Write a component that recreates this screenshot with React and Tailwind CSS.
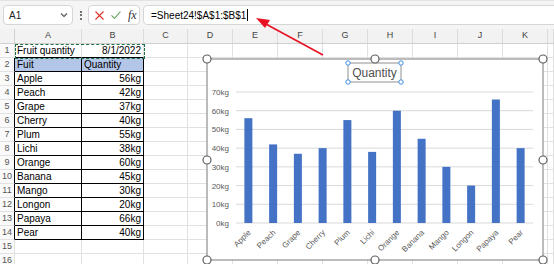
import React from "react";

const FONT = { fontFamily: '"Liberation Sans", Arial, sans-serif' };
const GRID = "grid grid-cols-[15px_67px_62px_44px_45px_45px_45px_45px_45px_45px_45px_45px_1fr]";
const LETTERS = ["A", "B", "C", "D", "E", "F", "G", "H", "I", "J", "K", ""];
const DATA = [
  ["Apple", 56], ["Peach", 42], ["Grape", 37], ["Cherry", 40], ["Plum", 55], ["Lichi", 38],
  ["Orange", 60], ["Banana", 45], ["Mango", 30], ["Longon", 20], ["Papaya", 66], ["Pear", 40],
];

function Cell({ children, className = "" }) {
  return (
    <div className={`h-full border-r border-b border-r-[#e1e1e1] border-b-[#e1e1e1] flex items-center overflow-hidden whitespace-nowrap ${className}`}>
      {children}
    </div>
  );
}

function Row({ n, a, b, kind }) {
  const inTable = kind === "head" || kind === "data";
  const rowHead = inTable ? "border-r-black" : "";
  const aCls = inTable ? "border-r-black border-b-black" : kind === "title" ? "border-b-black" : "";
  const bg = kind === "head" ? "bg-[#b4c6e7]" : "";
  return (
    <div className={`${GRID} h-[14px]`}>
      <Cell className={`justify-center text-[9px] text-[#555] bg-[#fafafa] border-r-[#d0d0d0] ${rowHead}`}>{n}</Cell>
      <Cell className={`pl-[2px] text-[10px] text-black ${bg} ${aCls}`}>{a}</Cell>
      <Cell className={`text-[10px] text-black ${bg} ${aCls} ${kind === "data" || kind === "title" ? "justify-end pr-[2px]" : "pl-[2px]"}`}>{b}</Cell>
      {Array.from({ length: 10 }).map((_, i) => (
        <Cell key={i} />
      ))}
    </div>
  );
}

function Chart() {
  const x0 = 236, x1 = 533, yBase = 223, yTop = 92;
  const pxPerKg = (yBase - yTop) / 70;
  const cw = (x1 - x0) / 12;
  const handles = [
    [207, 59], [375, 59], [543, 59], [207, 160], [543, 160], [207, 260], [375, 260], [543, 260],
  ];
  const ticks = [0, 10, 20, 30, 40, 50, 60, 70];
  return (
    <svg className="absolute left-0 top-0 pointer-events-none" width="554" height="264" viewBox="0 0 554 264">
      <rect x="207" y="59" width="336" height="201" fill="#fff" stroke="#8f8f8f" strokeWidth="1.2" />
      {ticks.map((t) => {
        const y = yBase - t * pxPerKg;
        return (
          <g key={t}>
            <line x1={x0} x2={x1} y1={y} y2={y} stroke="#d9d9d9" strokeWidth="1" />
            <text x="229" y={y + 3} fontSize="8" fill="#595959" textAnchor="end" style={FONT}>{t}kg</text>
          </g>
        );
      })}
      {DATA.map(([name, v], i) => {
        const cx = x0 + cw * i + cw / 2;
        const h = v * pxPerKg;
        return (
          <g key={name}>
            <rect x={cx - 4} y={yBase - h} width="8" height={h} fill="#4472c4" />
            <text
              x={cx + 3}
              y={233}
              fontSize="8"
              fill="#595959"
              textAnchor="end"
              textRendering="geometricPrecision"
              transform={`rotate(-45 ${cx + 3} 233)`}
              style={{ ...FONT, WebkitFontSmoothing: "antialiased" }}
            >
              {name}
            </text>
          </g>
        );
      })}
      <rect x="348" y="63" width="53" height="19" fill="none" stroke="#8f8f8f" strokeWidth="1" />
      <text x="374.5" y="77" fontSize="12" fill="#505050" textAnchor="middle" style={FONT}>Quantity</text>
      {[[348, 63], [401, 63], [348, 82], [401, 82]].map(([x, y], i) => (
        <circle key={i} cx={x} cy={y} r="2.2" fill="#fff" stroke="#3f8ee0" strokeWidth="1" />
      ))}
      {handles.map(([x, y], i) => (
        <circle key={i} cx={x} cy={y} r="4" fill="#fff" stroke="#5f5f5f" strokeWidth="1.2" />
      ))}
      {/* red arrow */}
      <line x1="323" y1="55" x2="264" y2="23" stroke="#e81123" strokeWidth="1.6" />
      <polygon points="256,18 270,20 265,28" fill="#e81123" />
    </svg>
  );
}

export default function App() {
  return (
    <div className="relative w-[554px] h-[264px] overflow-hidden bg-white" style={FONT}>
      {/* formula bar */}
      <div className="h-[29px] bg-[#f5f5f5] border-t border-t-[#e3e3e3] flex items-start pt-[4px]">
        <div className="ml-[3px] w-[70px] h-[20px] bg-white border border-[#d6d6d6] rounded-[4px] flex items-center justify-between pl-[5px] pr-[4px]">
          <span className="text-[10px] text-[#222]">A1</span>
          <svg width="8" height="6" viewBox="0 0 8 6">
            <path d="M1 1.5 L4 4.5 L7 1.5" fill="none" stroke="#555" strokeWidth="1.1" />
          </svg>
        </div>
        <div className="w-[15px] h-[20px] flex flex-col items-center justify-center gap-[1.5px]">
          <span className="w-[2px] h-[2px] bg-[#444] rounded-full" />
          <span className="w-[2px] h-[2px] bg-[#444] rounded-full" />
          <span className="w-[2px] h-[2px] bg-[#444] rounded-full" />
        </div>
        <div className="w-[52px] h-[20px] bg-white border border-[#d6d6d6] rounded-[4px] flex items-center pl-[6px] gap-[7px]">
          <svg width="9" height="9" viewBox="0 0 9 9">
            <path d="M0.5 0.5 L8.5 8.5 M8.5 0.5 L0.5 8.5" stroke="#e0352b" strokeWidth="1.1" />
          </svg>
          <svg width="10" height="8" viewBox="0 0 10 8">
            <path d="M0.5 4.3 L3.5 7.3 L9.5 0.5" fill="none" stroke="#5aa35a" strokeWidth="1.1" />
          </svg>
          <span className="text-[12px] italic text-[#333] leading-none" style={{ fontFamily: '"Liberation Serif", serif' }}>fx</span>
        </div>
        <div className="ml-[3px] flex-1 mr-[-6px] h-[20px] bg-white border border-[#d6d6d6] rounded-[4px] flex items-center pl-[7px]">
          <span className="text-[10px] text-black">=Sheet24!$A$1:$B$1</span>
          <span className="ml-[1px] w-px h-[12px] bg-black" />
        </div>
      </div>
      {/* column headers */}
      <div className={`${GRID} h-[15px] bg-[#f2f2f2] border-b border-b-[#d0d0d0]`}>
        <div className="border-r border-r-[#d0d0d0]" />
        {LETTERS.map((l, i) => (
          <div key={i} className="border-r border-r-[#dcdcdc] flex items-center justify-center text-[9px] text-[#444]">
            {l}
          </div>
        ))}
      </div>
      <div className="relative">
        <Row n={1} a="Fruit quantity" b="8/1/2022" kind="title" />
        <Row n={2} a="Fuit" b="Quantity" kind="head" />
        {DATA.map(([name, v], i) => (
          <Row key={name} n={i + 3} a={name} b={`${v}kg`} kind="data" />
        ))}
        <Row n={15} />
        <Row n={16} />
        <div className="absolute left-[15px] top-0 w-[130px] h-[15px] border border-dashed border-[#1e7145] pointer-events-none" />
      </div>
      <Chart />
    </div>
  );
}
